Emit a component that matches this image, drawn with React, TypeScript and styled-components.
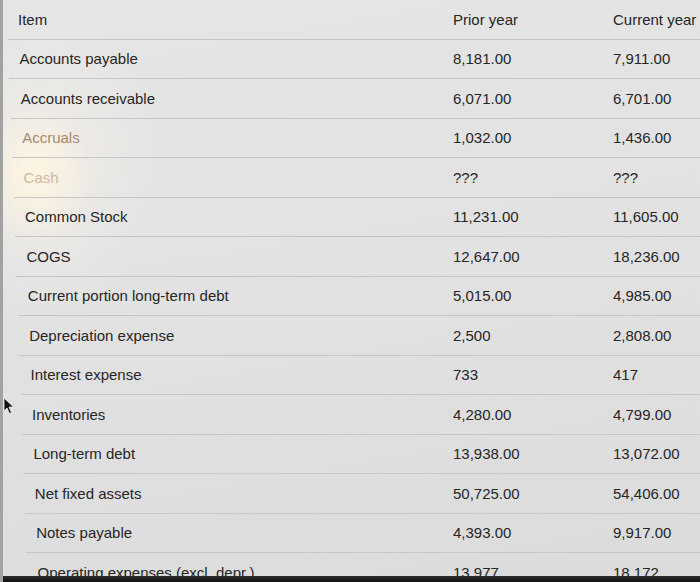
import React from "react";
import styled, { createGlobalStyle } from "styled-components";

const Global = createGlobalStyle`
  html, body { margin: 0; padding: 0; }
  body { font-family: "Liberation Sans", Arial, sans-serif; background: #dcdcdc; }
`;

const Page = styled.div`
  position: relative;
  width: 700px;
  height: 582px;
  overflow: hidden;
  display: flex;
  flex-direction: column;
  border-left: 3px solid #a2a2a2;
  box-sizing: border-box;
  background:
    radial-gradient(ellipse 55px 70px at 32px 175px, rgba(255, 246, 225, 0.95), rgba(255, 244, 220, 0) 100%),
    radial-gradient(ellipse 120px 150px at 40px 165px, rgba(248, 242, 232, 0.7), rgba(248, 242, 232, 0) 100%),
    linear-gradient(170deg, #e5e5e5 0%, #e2e2e2 45%, #dbdbdb 100%);
`;

const Table = styled.div`
  flex: 1;
  overflow: hidden;
  display: flex;
  flex-direction: column;
`;

const Row = styled.div<{ $indent: number }>`
  display: grid;
  grid-template-columns: ${(p) => 450 - p.$indent}px 160px 1fr;
  align-items: center;
  height: 39.5px;
  flex: none;
  margin-left: ${(p) => p.$indent}px;
  border-bottom: 1.5px solid #c6c6c6;
  box-sizing: border-box;
  font-size: 15px;
  color: #262626;
`;

const Label = styled.div<{ $tone?: string }>`
  padding-left: 10px;
  color: ${(p) => p.$tone || "#262626"};
  white-space: nowrap;
`;

const Value = styled.div`
  white-space: nowrap;
`;

const Bezel = styled.div`
  height: 6px;
  flex: none;
  background: linear-gradient(180deg, #2a2a2a, #111);
`;

const Cursor = styled.svg`
  position: absolute;
  left: 0px;
  top: 397px;
`;

type R = { label: string; prior: string; current: string; tone?: string };

const rows: R[] = [
  { label: "Item", prior: "Prior year", current: "Current year" },
  { label: "Accounts payable", prior: "8,181.00", current: "7,911.00" },
  { label: "Accounts receivable", prior: "6,071.00", current: "6,701.00" },
  { label: "Accruals", prior: "1,032.00", current: "1,436.00", tone: "#a58b6e" },
  { label: "Cash", prior: "???", current: "???", tone: "#cfb89c" },
  { label: "Common Stock", prior: "11,231.00", current: "11,605.00" },
  { label: "COGS", prior: "12,647.00", current: "18,236.00" },
  { label: "Current portion long-term debt", prior: "5,015.00", current: "4,985.00" },
  { label: "Depreciation expense", prior: "2,500", current: "2,808.00" },
  { label: "Interest expense", prior: "733", current: "417" },
  { label: "Inventories", prior: "4,280.00", current: "4,799.00" },
  { label: "Long-term debt", prior: "13,938.00", current: "13,072.00" },
  { label: "Net fixed assets", prior: "50,725.00", current: "54,406.00" },
  { label: "Notes payable", prior: "4,393.00", current: "9,917.00" },
  { label: "Operating expenses (excl. depr.)", prior: "13,977", current: "18,172" },
];

export default function App() {
  return (
    <>
      <Global />
      <Page>
        <Table>
          {rows.map((r, i) => (
            <Row key={r.label} $indent={5 + i * 1.4}>
              <Label $tone={r.tone}>{r.label}</Label>
              <Value>{r.prior}</Value>
              <Value>{r.current}</Value>
            </Row>
          ))}
        </Table>
        <Bezel />
        <Cursor width="12" height="18" viewBox="0 0 12 18">
          <path d="M1 1 L1 14 L4 11 L6.5 16.5 L8.5 15.5 L6 10 L10.5 10 Z" fill="#111" stroke="#eee" strokeWidth="0.8" />
        </Cursor>
      </Page>
    </>
  );
}
